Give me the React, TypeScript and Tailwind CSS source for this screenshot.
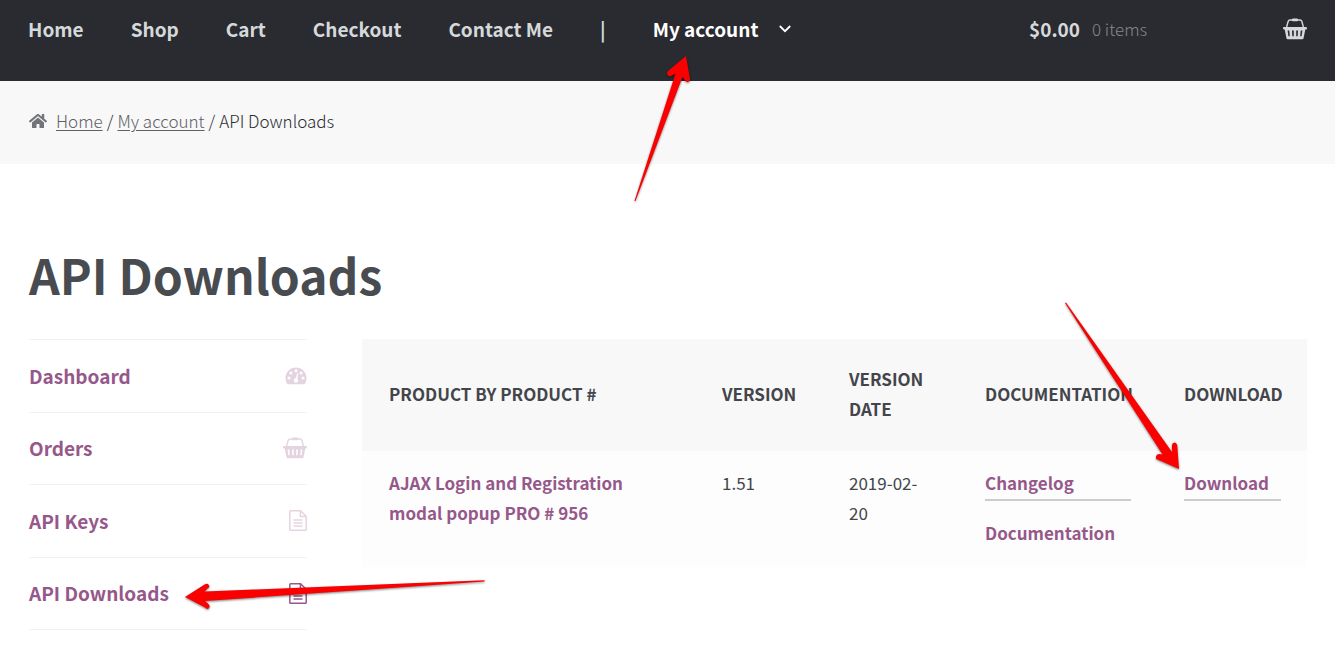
import type { ReactNode } from 'react'
import { FaHome } from 'react-icons/fa'

type IconProps = { className?: string }

function BasketIcon({ className }: IconProps) {
  return (
    <svg viewBox="0 0 24 22" className={className} aria-hidden="true">
      <path d="M3.6 9 5.2 3.2Q5.6 2 7 2H17Q18.4 2 18.8 3.2L20.4 9" fill="none" stroke="currentColor" strokeWidth="1.4" />
      <rect x="9" y="0.4" width="6" height="2.8" rx="1" fill="currentColor" />
      <path
        fill="currentColor"
        fillRule="evenodd"
        d="M1 9H23Q24 9 24 10.2T23 11.6H22.3L20.6 20Q20.4 21.2 19.2 21.2H4.8Q3.6 21.2 3.4 20L1.7 11.6H1Q0 11.6 0 10.2T1 9ZM4.6 12.6 5.4 18.2H6.8L6.3 12.6ZM9 12.6 9.3 18.2H10.8V12.6ZM13.2 12.6V18.2H14.7L15 12.6ZM17.7 12.6 17.2 18.2H18.6L19.4 12.6Z"
      />
    </svg>
  )
}

function GaugeIcon({ className }: IconProps) {
  return (
    <svg viewBox="0 0 22 18" className={className} aria-hidden="true">
      <path
        fill="currentColor"
        d="M11 0.5C5 0.5 0.5 5.2 0.5 11c0 2.2.5 4 1.6 5.7.2.4.5.5.9.5h16c.4 0 .7-.1.9-.5 1.1-1.7 1.6-3.5 1.6-5.7C21.5 5.2 17 0.5 11 0.5Z"
      />
      <g fill="white">
        <circle cx="4" cy="11" r="1.5" />
        <circle cx="5.9" cy="6" r="1.5" />
        <circle cx="11" cy="3.7" r="1.5" />
        <circle cx="16.1" cy="6" r="1.5" />
        <circle cx="18" cy="11" r="1.5" />
        <circle cx="11" cy="13.5" r="2.2" />
        <path d="M10.3 12.5 12.2 6.2 13.3 6.5 12 12.8Z" />
      </g>
    </svg>
  )
}

function FileIcon({ className }: IconProps) {
  return (
    <svg viewBox="0 0 18 21" className={className} fill="none" stroke="currentColor" strokeWidth="1.5" aria-hidden="true">
      <path d="M1.6 0.8H11.6L17.2 6.2V19.4Q17.2 20.2 16.4 20.2H1.6Q0.8 20.2 0.8 19.4V1.6Q0.8 0.8 1.6 0.8ZM11.4 1V6.6H17" />
      <path d="M4.5 10H13.5M4.5 13H13.5M4.5 16H13.5" />
    </svg>
  )
}

const navLinks = ['Home', 'Shop', 'Cart', 'Checkout', 'Contact Me', '|']

const accountLinks: { label: string; icon: ReactNode; active?: boolean }[] = [
  { label: 'Dashboard', icon: <GaugeIcon className="h-[18px] w-[22px]" /> },
  { label: 'Orders', icon: <BasketIcon className="h-[22px] w-6" /> },
  { label: 'API Keys', icon: <FileIcon className="h-[21px] w-[18px]" /> },
  { label: 'API Downloads', icon: <FileIcon className="h-[21px] w-[18px]" />, active: true },
]

function Header() {
  return (
    <header className="flex h-[81px] items-start justify-between bg-[#2a2b30] px-7 pt-[15px] leading-7 text-[#d5d9db]">
      <nav className="flex gap-[47px] text-[19px] font-bold">
        {navLinks.map((label) => (
          <a key={label} href="#">
            {label}
          </a>
        ))}
        <a href="#" className="flex items-center gap-[21px] text-white">
          My account
          <svg viewBox="0 0 12 8" className="h-2 w-3" fill="none" stroke="currentColor" strokeWidth="1.8" aria-hidden="true">
            <path d="M0.8 1 6 6.2 11.2 1" />
          </svg>
        </a>
      </nav>
      <a href="#" className="flex w-[278px] items-center">
        <span className="text-[19px] font-bold">$0.00</span>
        <span className="ml-3 text-[17px] font-light text-[#85878a]">0 items</span>
        <BasketIcon className="ml-auto h-[22px] w-6" />
      </a>
    </header>
  )
}

function Breadcrumb() {
  return (
    <nav
      aria-label="Breadcrumb"
      className="flex h-[83px] items-center bg-[#f8f8f8] px-[29px] pb-[3px] text-[17px] font-light text-[#2b2d33]"
    >
      <a href="#" className="flex items-center text-[#5f6166]">
        <FaHome className="mr-[9px] size-[18px] text-[#727479]" aria-hidden="true" />
        <span className="underline underline-offset-2">Home</span>
      </a>
      <span className="mx-1">/</span>
      <a href="#" className="text-[#5f6166] underline underline-offset-2">
        My account
      </a>
      <span className="mx-1">/</span>
      <span>API Downloads</span>
    </nav>
  )
}

function AccountMenu() {
  return (
    <nav aria-label="Account" className="w-[278px] shrink-0">
      <ul className="grid min-h-[291px] auto-rows-fr border-t border-[#f2f2f2]">
        {accountLinks.map(({ label, icon, active }) => (
          <li key={label} className="flex border-b border-[#f2f2f2]">
            <a href="#" className="flex flex-1 items-center justify-between text-[19px] font-bold text-[#96588a]">
              {label}
              <span className={active ? '' : 'opacity-25'}>{icon}</span>
            </a>
          </li>
        ))}
      </ul>
    </nav>
  )
}

function DownloadsTable() {
  return (
    <div className="min-w-0 flex-1">
      <table className="w-full table-fixed text-left text-[17px] leading-[30px]">
        <colgroup>
          <col />
          <col className="w-[127px]" />
          <col className="w-[136px]" />
          <col className="w-[199px]" />
          <col className="w-[150px]" />
        </colgroup>
        <thead className="bg-[#f8f8f8] uppercase">
          <tr>
            <th className="pt-[25px] pr-[26px] pb-[27px] pl-[27px]">Product by Product #</th>
            <th className="pt-[25px] pr-[26px] pb-[27px] pl-[27px]">Version</th>
            <th className="pt-[25px] pr-[26px] pb-[27px] pl-[27px]">Version Date</th>
            <th className="pt-[25px] pr-[26px] pb-[27px] pl-[27px]">Documentation</th>
            <th className="pt-[25px] pr-[26px] pb-[27px] pl-[27px]">Download</th>
          </tr>
        </thead>
        <tbody className="bg-[#fdfdfd] align-top">
          <tr>
            <td className="pt-[17px] pr-[26px] pb-[19px] pl-[27px]">
              <a href="#" className="font-bold text-[#96588a]">
                AJAX Login and Registration modal popup PRO # 956
              </a>
            </td>
            <td className="pt-[17px] pr-[26px] pb-[19px] pl-[27px]">1.51</td>
            <td className="pt-[17px] pr-[26px] pb-[19px] pl-[27px]">2019-02-20</td>
            <td className="pt-[17px] pr-[26px] pb-[19px] pl-[27px] font-bold text-[#96588a]">
              <a href="#" className="mb-[17px] block border-b-2 border-[#cccccc] pb-px">
                Changelog
              </a>
              <a href="#" className="block">
                Documentation
              </a>
            </td>
            <td className="pt-[17px] pr-[26px] pb-[19px] pl-[27px] font-bold text-[#96588a]">
              <a href="#" className="block border-b-2 border-[#cccccc] pb-px">
                Download
              </a>
            </td>
          </tr>
        </tbody>
      </table>
    </div>
  )
}

// Red pointers drawn over the page
function Arrows() {
  return (
    <svg
      className="pointer-events-none absolute top-0 left-0 h-[646px] w-[1335px] drop-shadow-[0_1px_1px_rgba(0,0,0,0.5)]"
      viewBox="0 0 1335 646"
      fill="#fa0000"
      aria-hidden="true"
    >
      <path d="M686 56 668 71Q666 73 667.500 75T671 76L675.500 73.500 634.500 201 635.500 201 682.500 77 685 80Q686 82.500 688 82T690 79Z" />
      <path d="M1179 469 1177.200 445Q1176.500 442.500 1174.500 442.500T1172 445V452L1066 302.500 1065 303 1162.500 454.500 1159 454Q1156.500 454 1156 456.500T1157.500 459.500Z" />
      <path d="M185 597 205 584.200Q207.500 583 208.800 585T208 588L204.500 591.500 484.500 580.300V581.400L205 601 208.500 604Q210.500 606 209 608T205 607.500Z" />
    </svg>
  )
}

export default function App() {
  return (
    <div className="relative min-h-screen overflow-hidden bg-white font-['Noto_Sans_CJK_SC',sans-serif] text-[#43454b]">
      <Header />
      <Breadcrumb />
      <main className="px-7 pt-[74px] pl-[29px]">
        <h1 className="text-[48px] leading-[72px] font-bold text-[#484c51]">API Downloads</h1>
        <div className="mt-[29px] flex gap-[55px]">
          <AccountMenu />
          <DownloadsTable />
        </div>
      </main>
      <Arrows />
    </div>
  )
}
